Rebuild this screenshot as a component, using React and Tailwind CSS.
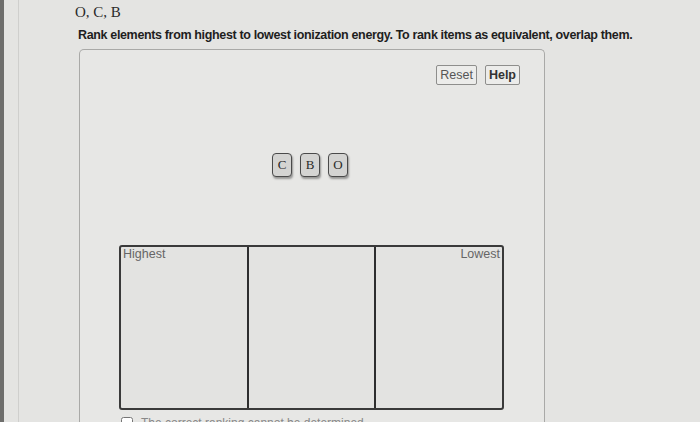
import { useState } from 'react'

const TILES = ['C', 'B', 'O']

function Tile({ label }) {
  return (
    <div className="w-[20px] h-[24px] flex items-center justify-center rounded-[4px] border border-[#4a4a4a] bg-[#d4d4d2] shadow-[1px_2px_2px_rgba(0,0,0,0.35)] font-['Liberation_Serif',serif] text-[13px] text-[#2a2a2a]">
      {label}
    </div>
  )
}

function Bin({ label, align, last }) {
  return (
    <div className={`flex-1 flex flex-col ${last ? '' : 'border-r-2 border-[#2e2e2e]'}`}>
      {label && (
        <div className={`flex ${align === 'right' ? 'justify-end' : 'justify-start'}`}>
          <span className="px-[2px] leading-[15px] text-[12.5px] text-[#666] font-['Liberation_Sans',sans-serif]">{label}</span>
        </div>
      )}
    </div>
  )
}

export default function App() {
  const [unsure, setUnsure] = useState(false)

  return (
    <div className="w-[700px] h-[422px] overflow-hidden bg-[#e4e4e2] flex">
      <div className="w-[4px] bg-[#6e6e6c] shrink-0" />
      <div className="w-[15px] shrink-0 border-r border-[#cfcfcd]" />
      <div className="flex-1 flex flex-col pl-[56px] pt-[3px]">
        <div className="font-['Liberation_Serif',serif] text-[15px] leading-[18px] text-[#2a2a2a]">O, C, B</div>
        <div className="mt-[6px] ml-[3px] font-['Liberation_Sans',sans-serif] font-bold text-[12.5px] leading-[16px] text-[#1e1e1e] tracking-[-0.35px] whitespace-nowrap">
          Rank elements from highest to lowest ionization energy. To rank items as equivalent, overlap them.
        </div>

        <div className="mt-[6px] ml-[4px] w-[466px] flex-1 rounded-t-[5px] border border-b-0 border-[#a9a9a7] bg-[#e7e7e5] flex flex-col">
          <div className="flex justify-end gap-[8px] pr-[24px] pt-[15px]">
            <button className="h-[20px] px-[3px] rounded-[2px] border border-[#8e8e8c] bg-[#ececea] font-['Liberation_Sans',sans-serif] text-[12.5px] text-[#555]">Reset</button>
            <button className="h-[20px] px-[3px] rounded-[2px] border border-[#8e8e8c] bg-[#ececea] font-['Liberation_Sans',sans-serif] font-bold text-[12.5px] text-[#333]">Help</button>
          </div>

          <div className="flex gap-[8px] pl-[192px] mt-[68px]">
            {TILES.map((t) => <Tile key={t} label={t} />)}
          </div>

          <div className="ml-[39px] mt-[68px] w-[385px] h-[165px] flex rounded-[3px] border-2 border-[#3a3a3a] bg-[#e3e3e1]">
            <Bin label="Highest" align="left" />
            <Bin />
            <Bin label="Lowest" align="right" last />
          </div>

          <label className="ml-[41px] mt-[4px] flex items-center gap-[8px] font-['Liberation_Sans',sans-serif] text-[12px] text-[#888]">
            <input type="checkbox" checked={unsure} onChange={(e) => setUnsure(e.target.checked)} className="w-[12px] h-[12px] accent-[#666]" />
            The correct ranking cannot be determined.
          </label>
        </div>
      </div>
    </div>
  )
}
